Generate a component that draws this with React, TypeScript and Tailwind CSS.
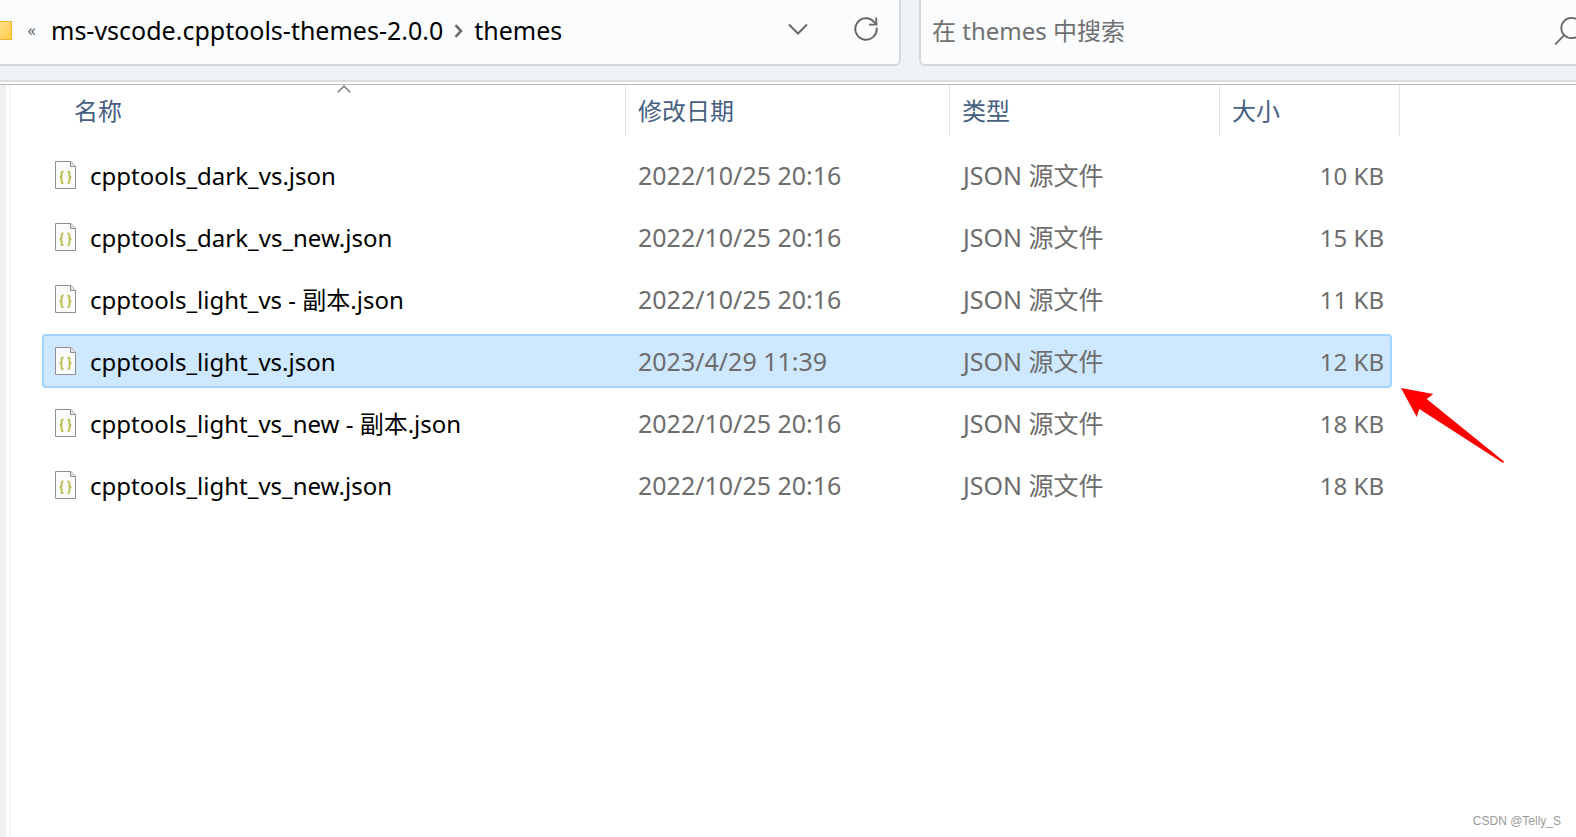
import { useState } from "react";

interface FileRow {
  name: string;
  modified: string;
  type: string;
  size: string;
}

const files: FileRow[] = [
  { name: "cpptools_dark_vs.json", modified: "2022/10/25 20:16", type: "JSON 源文件", size: "10 KB" },
  { name: "cpptools_dark_vs_new.json", modified: "2022/10/25 20:16", type: "JSON 源文件", size: "15 KB" },
  { name: "cpptools_light_vs - 副本.json", modified: "2022/10/25 20:16", type: "JSON 源文件", size: "11 KB" },
  { name: "cpptools_light_vs.json", modified: "2023/4/29 11:39", type: "JSON 源文件", size: "12 KB" },
  { name: "cpptools_light_vs_new - 副本.json", modified: "2022/10/25 20:16", type: "JSON 源文件", size: "18 KB" },
  { name: "cpptools_light_vs_new.json", modified: "2022/10/25 20:16", type: "JSON 源文件", size: "18 KB" },
];

/* ── Icons ───────────────────────────────────────────────────── */

function JsonIcon() {
  return (
    <svg width="22" height="28" viewBox="0 0 22 28" className="mb-[2px] shrink-0" aria-hidden="true">
      <path d="M.5.5H16L20.5 5.5V27.5H.5Z" fill="#fafbfd" stroke="#8f8f8f" />
      <path d="M15.5 .5V5.5H20.5" fill="#e6e6e6" stroke="#8f8f8f" />
      <g fill="none" stroke="#bcbc4a" strokeWidth="1.8">
        <path d="M8.5 10.5H8Q6.6 10.5 6.6 12.2V14.6Q6.6 16.3 4.6 16.3Q6.6 16.3 6.6 18V20.4Q6.6 22.1 8 22.1H8.5" />
        <path d="M12.5 10.5H13Q14.4 10.5 14.4 12.2V14.6Q14.4 16.3 16.4 16.3Q14.4 16.3 14.4 18V20.4Q14.4 22.1 13 22.1H12.5" />
      </g>
    </svg>
  );
}

function RefreshIcon() {
  return (
    <svg width="26" height="26" viewBox="0 0 26 26" fill="none" stroke="#666" strokeWidth="1.9" aria-hidden="true">
      <path d="M23.6 11.5A10.7 10.7 0 1 1 21.5 6.5L23.3 8.6" />
      <path d="M23.3 1.5V8.6H16" />
    </svg>
  );
}

function SearchIcon() {
  return (
    <svg width="30" height="30" viewBox="0 0 30 30" fill="none" stroke="#666" strokeWidth="1.8" aria-hidden="true">
      <circle cx="17.5" cy="12" r="10.2" />
      <path d="M10.3 19.2L1.2 28.3" />
    </svg>
  );
}

/* ── Toolbar ─────────────────────────────────────────────────── */

function Toolbar() {
  return (
    <header className="flex h-[82px] gap-[18px] overflow-hidden border-b-2 border-[#dadde1] bg-[#eef3f8]">
      <nav aria-label="地址" className="flex h-[66px] w-[901px] shrink-0 items-center rounded-br-md border-r-2 border-b-2 border-[#d6d8da] bg-[#fbfcfe] pr-[20px] pb-[2px]">
        <span className="mb-[2px] h-[19px] w-[12px] border-y border-r border-[#efb22e] bg-gradient-to-br from-[#ffe08a] to-[#ffcb3d]" />
        <button type="button" aria-label="上级" className="ml-[14px] mb-[2px] w-[11px] text-[16px] leading-4 text-[#606060]">
          «
        </button>
        <a href="#parent" className="ml-[14px] text-[25px]">ms-vscode.cpptools-themes-2.0.0</a>
        <svg width="9" height="14" viewBox="0 0 9 14" className="mx-[11px]" fill="none" stroke="#6b6b6b" strokeWidth="2.6" aria-hidden="true">
          <path d="M1.5 1.2L7 7L1.5 12.8" />
        </svg>
        <a href="#themes" className="text-[25px]">themes</a>
        <button type="button" aria-label="历史记录" className="mr-[45px] mb-[4px] ml-auto">
          <svg width="20" height="12" viewBox="0 0 20 12" fill="none" stroke="#666" strokeWidth="2" aria-hidden="true">
            <path d="M1 1.5L10 10.5L19 1.5" />
          </svg>
        </button>
        <button type="button" aria-label="刷新" className="mb-[4px]">
          <RefreshIcon />
        </button>
      </nav>
      <div className="-mr-4 flex h-[66px] min-w-0 grow items-center rounded-bl-md border-b-2 border-l-2 border-[#d6d8da] bg-[#fbfcfe] pb-[2px] pl-[11px]">
        <input
          type="search"
          aria-label="搜索"
          placeholder="在 themes 中搜索"
          className="min-w-0 grow bg-transparent text-[24px] outline-none placeholder:text-[#707070]"
        />
        <button type="button" aria-label="开始搜索" className="mr-[8px] shrink-0">
          <SearchIcon />
        </button>
      </div>
    </header>
  );
}

/* ── File list ───────────────────────────────────────────────── */

const headCell = "h-[51px] border-r border-[#e2e2e2] p-0 text-left font-normal text-[#46607f]";

function FileTable() {
  const [selected, setSelected] = useState("cpptools_light_vs.json");

  return (
    <table className="w-[1358px] table-fixed border-separate border-spacing-0 text-[24px]">
      <colgroup>
        <col className="w-[584px]" />
        <col className="w-[324px]" />
        <col className="w-[270px]" />
        <col className="w-[180px]" />
      </colgroup>
      <thead>
        <tr>
          <th className={headCell} aria-sort="ascending">
            <div className="relative ml-[20px] pl-[12px]">
              <button type="button">名称</button>
              <svg width="14" height="8" viewBox="0 0 14 8" className="absolute -top-2 left-1/2 -ml-[7px]" fill="none" stroke="#555" strokeWidth="1.2" aria-hidden="true">
                <path d="M.7 7.3L7 1L13.3 7.3" />
              </svg>
            </div>
          </th>
          <th className={headCell}><button type="button" className="ml-[12px]">修改日期</button></th>
          <th className={headCell}><button type="button" className="ml-[12px]">类型</button></th>
          <th className={headCell}><button type="button" className="ml-[12px]">大小</button></th>
        </tr>
      </thead>
      <tbody className="before:block before:h-2">
        {files.map((file) => {
          const cell = file.name === selected
            ? "flex h-[54px] items-center border-y-2 border-[#a3d4fd] bg-[#cde8ff] pt-[2px]"
            : "flex h-[54px] items-center border-y-2 border-transparent pt-[2px]";
          return (
            <tr key={file.name} onClick={() => setSelected(file.name)} className="text-[#6d6d6d]">
              <td className="p-0 py-1">
                <div className={`${cell} gap-[13px] rounded-l-sm border-l-2 pl-[11px] text-black`}>
                  <JsonIcon />
                  <span className="whitespace-nowrap">{file.name}</span>
                </div>
              </td>
              <td className="p-0 py-1"><div className={`${cell} pl-[12px] text-[25px]`}>{file.modified}</div></td>
              <td className="p-0 py-1"><div className={`${cell} pl-[13px] text-[25px]`}>{file.type}</div></td>
              <td className="p-0 py-1 pr-[8px]">
                <div className={`${cell} justify-end rounded-r-sm border-r-2 pr-[6px]`}>{file.size}</div>
              </td>
            </tr>
          );
        })}
      </tbody>
    </table>
  );
}

export default function App() {
  return (
    <div className="relative flex min-h-screen flex-col overflow-hidden bg-white font-['Noto_Sans','Noto_Sans_CJK_SC',sans-serif] text-black">
      <Toolbar />
      <main className="mt-[2px] flex grow border-t border-[#b9b9b9]">
        <div className="w-[6px] shrink-0 bg-[#efefef]" />
        <div className="ml-[3px] w-[2px] shrink-0 bg-[#f6f6f6]" />
        <div className="pl-[31px]">
          <FileTable />
        </div>
      </main>

      {/* Annotation arrow pointing at the selected row */}
      <svg width="104" height="77" viewBox="0 0 104 77" className="absolute top-[387px] left-[1400px]" aria-hidden="true">
        <path d="M1 1L33.3 7L26.7 12L104 74.5L103 76L19.3 22L16.7 30Z" fill="#fe0000" />
      </svg>
      <p className="absolute right-[15px] bottom-[8px] font-['Liberation_Sans',sans-serif] text-[12px] leading-4 text-[#999]">
        CSDN @Telly_S
      </p>
    </div>
  );
}
